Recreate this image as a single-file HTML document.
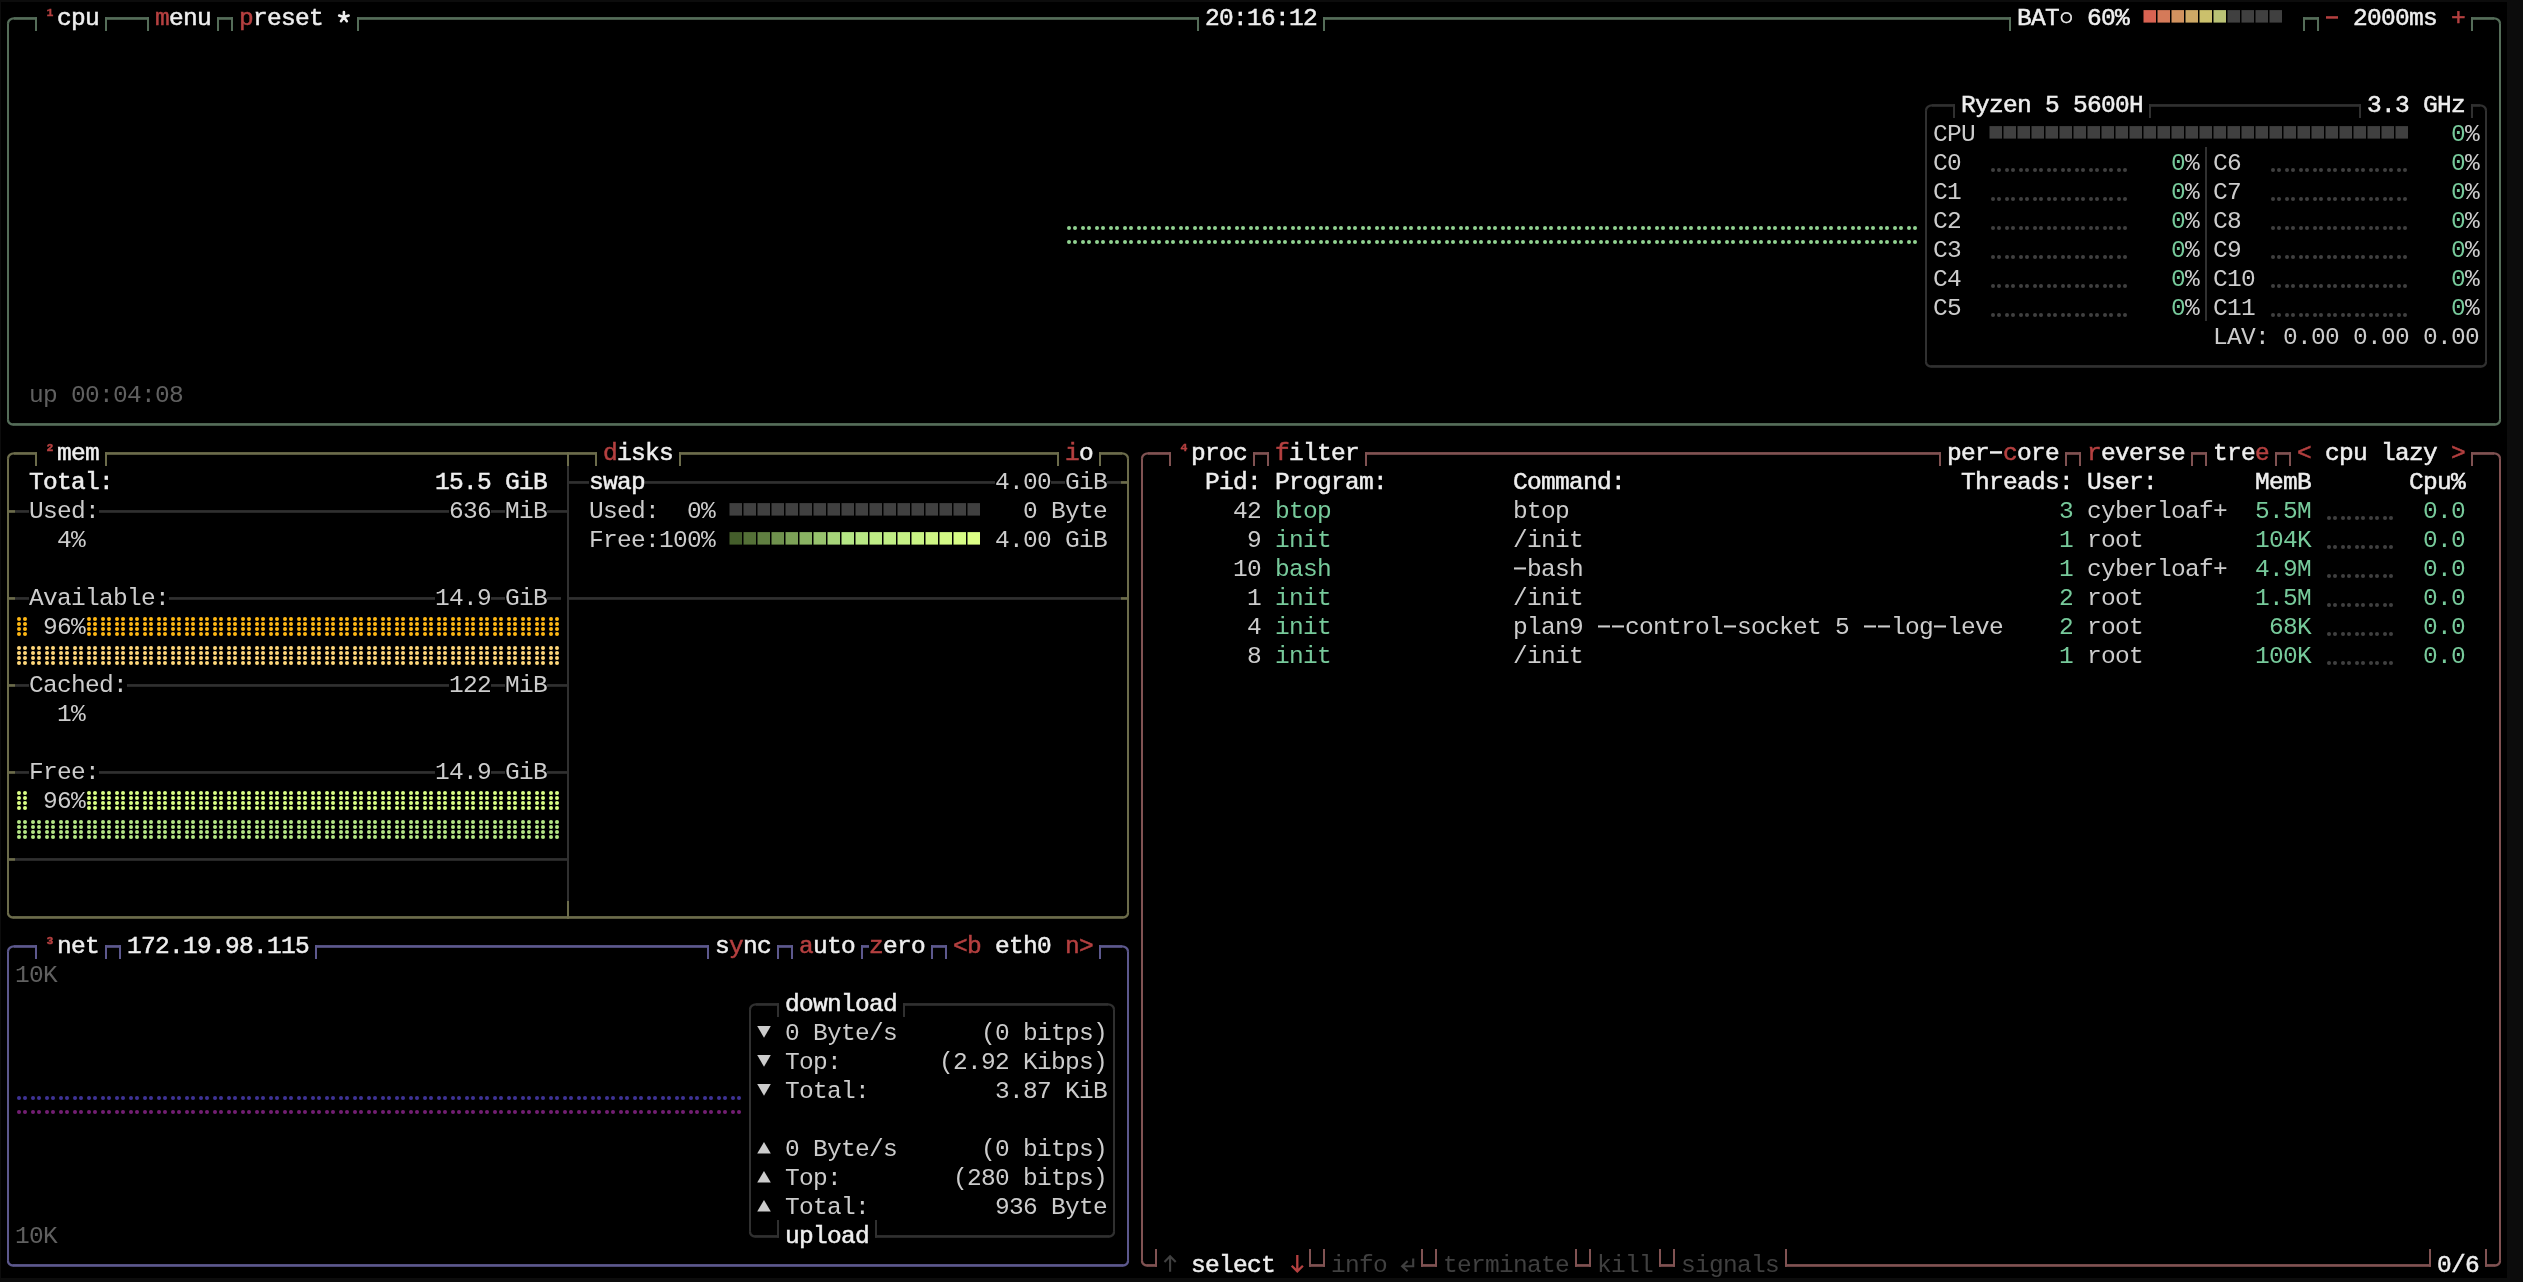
<!DOCTYPE html>
<html><head><meta charset="utf-8"><title>btop</title>
<style>
html,body{margin:0;padding:0;width:2523px;height:1282px;overflow:hidden;background:#0c0c0c}
#term{position:absolute;left:1px;top:2px;width:2506px;height:1276px;background:#000}
#g{position:absolute;left:0;top:0}
#tx{position:absolute;left:0;top:0;width:2523px;height:1282px;will-change:transform}
.s{position:absolute;white-space:pre;font-family:"Liberation Mono",monospace;font-size:24.5px;line-height:29px;letter-spacing:-0.7022px}
.b{-webkit-text-stroke:0.5px currentColor}
.sup{position:absolute;white-space:pre;font-family:"Liberation Mono",monospace;font-size:11.5px;line-height:14px;width:14px;text-align:center;font-weight:bold;-webkit-text-stroke:0.4px currentColor}
</style></head><body>
<div id="term"></div>
<svg id="g" width="2523" height="1282" viewBox="0 0 2523 1282"><defs><pattern id="p0" patternUnits="userSpaceOnUse" x="1" y="2" width="14" height="29"><g fill="#91d291"><circle cx="4" cy="23" r="2"/><circle cx="10" cy="23" r="2"/></g></pattern><pattern id="p1" patternUnits="userSpaceOnUse" x="1" y="2" width="14" height="29"><g fill="#91d291"><circle cx="4" cy="8" r="2"/><circle cx="10" cy="8" r="2"/></g></pattern><pattern id="p2" patternUnits="userSpaceOnUse" x="1" y="2" width="14" height="29"><g fill="#404040"><circle cx="4" cy="23" r="2"/><circle cx="10" cy="23" r="2"/></g></pattern><pattern id="p3" patternUnits="userSpaceOnUse" x="1" y="2" width="14" height="29"><g fill="#ffb814"><circle cx="4" cy="8" r="2"/><circle cx="10" cy="8" r="2"/><circle cx="4" cy="13" r="2"/><circle cx="10" cy="13" r="2"/><circle cx="4" cy="18" r="2"/><circle cx="10" cy="18" r="2"/><circle cx="4" cy="23" r="2"/><circle cx="10" cy="23" r="2"/></g></pattern><pattern id="p4" patternUnits="userSpaceOnUse" x="1" y="2" width="14" height="29"><g fill="#ffd77a"><circle cx="4" cy="8" r="2"/><circle cx="10" cy="8" r="2"/><circle cx="4" cy="13" r="2"/><circle cx="10" cy="13" r="2"/><circle cx="4" cy="18" r="2"/><circle cx="10" cy="18" r="2"/><circle cx="4" cy="23" r="2"/><circle cx="10" cy="23" r="2"/></g></pattern><pattern id="p5" patternUnits="userSpaceOnUse" x="1" y="2" width="14" height="29"><g fill="#dcff85"><circle cx="4" cy="8" r="2"/><circle cx="10" cy="8" r="2"/><circle cx="4" cy="13" r="2"/><circle cx="10" cy="13" r="2"/><circle cx="4" cy="18" r="2"/><circle cx="10" cy="18" r="2"/><circle cx="4" cy="23" r="2"/><circle cx="10" cy="23" r="2"/></g></pattern><pattern id="p6" patternUnits="userSpaceOnUse" x="1" y="2" width="14" height="29"><g fill="#b5e685"><circle cx="4" cy="8" r="2"/><circle cx="10" cy="8" r="2"/><circle cx="4" cy="13" r="2"/><circle cx="10" cy="13" r="2"/><circle cx="4" cy="18" r="2"/><circle cx="10" cy="18" r="2"/><circle cx="4" cy="23" r="2"/><circle cx="10" cy="23" r="2"/></g></pattern><pattern id="p7" patternUnits="userSpaceOnUse" x="1" y="2" width="14" height="29"><g fill="#3e3296"><circle cx="4" cy="23" r="2"/><circle cx="10" cy="23" r="2"/></g></pattern><pattern id="p8" patternUnits="userSpaceOnUse" x="1" y="2" width="14" height="29"><g fill="#731e73"><circle cx="4" cy="8" r="2"/><circle cx="10" cy="8" r="2"/></g></pattern></defs>
<rect x="15" y="17.1" width="22" height="2.7" fill="#556d59"/>
<rect x="105" y="17.1" width="44" height="2.7" fill="#556d59"/>
<rect x="217" y="17.1" width="16" height="2.7" fill="#556d59"/>
<rect x="357" y="17.1" width="842" height="2.7" fill="#556d59"/>
<rect x="1323" y="17.1" width="688" height="2.7" fill="#556d59"/>
<rect x="2303" y="17.1" width="16" height="2.7" fill="#556d59"/>
<rect x="2471" y="17.1" width="22" height="2.7" fill="#556d59"/>
<rect x="1933" y="104.1" width="22" height="2.7" fill="#303030"/>
<rect x="2149" y="104.1" width="212" height="2.7" fill="#303030"/>
<rect x="2471" y="104.1" width="8" height="2.7" fill="#303030"/>
<rect x="1933" y="365.1" width="546" height="2.7" fill="#303030"/>
<rect x="15" y="423.1" width="2478" height="2.7" fill="#556d59"/>
<rect x="15" y="452.1" width="22" height="2.7" fill="#6c6c4b"/>
<rect x="105" y="452.1" width="492" height="2.7" fill="#6c6c4b"/>
<rect x="679" y="452.1" width="380" height="2.7" fill="#6c6c4b"/>
<rect x="1099" y="452.1" width="22" height="2.7" fill="#6c6c4b"/>
<rect x="1149" y="452.1" width="22" height="2.7" fill="#805252"/>
<rect x="1253" y="452.1" width="16" height="2.7" fill="#805252"/>
<rect x="1365" y="452.1" width="576" height="2.7" fill="#805252"/>
<rect x="2065" y="452.1" width="16" height="2.7" fill="#805252"/>
<rect x="2191" y="452.1" width="16" height="2.7" fill="#805252"/>
<rect x="2275" y="452.1" width="16" height="2.7" fill="#805252"/>
<rect x="2471" y="452.1" width="22" height="2.7" fill="#805252"/>
<rect x="567" y="481.1" width="22" height="2.7" fill="#303030"/>
<rect x="645" y="481.1" width="350" height="2.7" fill="#303030"/>
<rect x="1051" y="481.1" width="14" height="2.7" fill="#303030"/>
<rect x="1107" y="481.1" width="14" height="2.7" fill="#303030"/>
<rect x="1121" y="481.1" width="8" height="2.7" fill="#6c6c4b"/>
<rect x="7" y="510.1" width="8" height="2.7" fill="#6c6c4b"/>
<rect x="15" y="510.1" width="14" height="2.7" fill="#303030"/>
<rect x="99" y="510.1" width="350" height="2.7" fill="#303030"/>
<rect x="491" y="510.1" width="14" height="2.7" fill="#303030"/>
<rect x="547" y="510.1" width="22" height="2.7" fill="#303030"/>
<rect x="7" y="597.1" width="8" height="2.7" fill="#6c6c4b"/>
<rect x="1121" y="597.1" width="8" height="2.7" fill="#6c6c4b"/>
<rect x="15" y="597.1" width="14" height="2.7" fill="#303030"/>
<rect x="169" y="597.1" width="266" height="2.7" fill="#303030"/>
<rect x="491" y="597.1" width="14" height="2.7" fill="#303030"/>
<rect x="547" y="597.1" width="14" height="2.7" fill="#303030"/>
<rect x="567" y="597.1" width="554" height="2.7" fill="#303030"/>
<rect x="7" y="684.1" width="8" height="2.7" fill="#6c6c4b"/>
<rect x="15" y="684.1" width="14" height="2.7" fill="#303030"/>
<rect x="127" y="684.1" width="322" height="2.7" fill="#303030"/>
<rect x="491" y="684.1" width="14" height="2.7" fill="#303030"/>
<rect x="547" y="684.1" width="22" height="2.7" fill="#303030"/>
<rect x="7" y="771.1" width="8" height="2.7" fill="#6c6c4b"/>
<rect x="15" y="771.1" width="14" height="2.7" fill="#303030"/>
<rect x="99" y="771.1" width="336" height="2.7" fill="#303030"/>
<rect x="491" y="771.1" width="14" height="2.7" fill="#303030"/>
<rect x="547" y="771.1" width="22" height="2.7" fill="#303030"/>
<rect x="7" y="858.1" width="8" height="2.7" fill="#6c6c4b"/>
<rect x="15" y="858.1" width="554" height="2.7" fill="#303030"/>
<rect x="15" y="916.1" width="1106" height="2.7" fill="#6c6c4b"/>
<rect x="15" y="945.1" width="22" height="2.7" fill="#5c588d"/>
<rect x="105" y="945.1" width="16" height="2.7" fill="#5c588d"/>
<rect x="315" y="945.1" width="394" height="2.7" fill="#5c588d"/>
<rect x="777" y="945.1" width="16" height="2.7" fill="#5c588d"/>
<rect x="861" y="945.1" width="8" height="2.7" fill="#5c588d"/>
<rect x="931" y="945.1" width="16" height="2.7" fill="#5c588d"/>
<rect x="1099" y="945.1" width="22" height="2.7" fill="#5c588d"/>
<rect x="757" y="1003.1" width="22" height="2.7" fill="#303030"/>
<rect x="903" y="1003.1" width="204" height="2.7" fill="#303030"/>
<rect x="757" y="1235.1" width="22" height="2.7" fill="#303030"/>
<rect x="875" y="1235.1" width="232" height="2.7" fill="#303030"/>
<rect x="15" y="1264.1" width="1106" height="2.7" fill="#5c588d"/>
<rect x="1149" y="1264.1" width="8" height="2.7" fill="#805252"/>
<rect x="1309" y="1264.1" width="16" height="2.7" fill="#805252"/>
<rect x="1421" y="1264.1" width="16" height="2.7" fill="#805252"/>
<rect x="1575" y="1264.1" width="16" height="2.7" fill="#805252"/>
<rect x="1659" y="1264.1" width="16" height="2.7" fill="#805252"/>
<rect x="1785" y="1264.1" width="646" height="2.7" fill="#805252"/>
<rect x="2485" y="1264.1" width="8" height="2.7" fill="#805252"/>
<rect x="35" y="17.1" width="2" height="13.9" fill="#556d59"/>
<rect x="105" y="17.1" width="2" height="13.9" fill="#556d59"/>
<rect x="147" y="17.1" width="2" height="13.9" fill="#556d59"/>
<rect x="217" y="17.1" width="2" height="13.9" fill="#556d59"/>
<rect x="231" y="17.1" width="2" height="13.9" fill="#556d59"/>
<rect x="357" y="17.1" width="2" height="13.9" fill="#556d59"/>
<rect x="1197" y="17.1" width="2" height="13.9" fill="#556d59"/>
<rect x="1323" y="17.1" width="2" height="13.9" fill="#556d59"/>
<rect x="2009" y="17.1" width="2" height="13.9" fill="#556d59"/>
<rect x="2303" y="17.1" width="2" height="13.9" fill="#556d59"/>
<rect x="2317" y="17.1" width="2" height="13.9" fill="#556d59"/>
<rect x="2471" y="17.1" width="2" height="13.9" fill="#556d59"/>
<rect x="7" y="31" width="2" height="377" fill="#556d59"/>
<rect x="2499" y="31" width="2" height="377" fill="#556d59"/>
<rect x="1953" y="104.1" width="2" height="13.9" fill="#303030"/>
<rect x="2149" y="104.1" width="2" height="13.9" fill="#303030"/>
<rect x="2359" y="104.1" width="2" height="13.9" fill="#303030"/>
<rect x="2471" y="104.1" width="2" height="13.9" fill="#303030"/>
<rect x="1925" y="118" width="2" height="232" fill="#303030"/>
<rect x="2485" y="118" width="2" height="232" fill="#303030"/>
<rect x="2205" y="147" width="2" height="174" fill="#303030"/>
<rect x="35" y="452.1" width="2" height="13.9" fill="#6c6c4b"/>
<rect x="105" y="452.1" width="2" height="13.9" fill="#6c6c4b"/>
<rect x="567" y="452.1" width="2" height="13.9" fill="#6c6c4b"/>
<rect x="567" y="901" width="2" height="17.8" fill="#6c6c4b"/>
<rect x="595" y="452.1" width="2" height="13.9" fill="#6c6c4b"/>
<rect x="679" y="452.1" width="2" height="13.9" fill="#6c6c4b"/>
<rect x="1057" y="452.1" width="2" height="13.9" fill="#6c6c4b"/>
<rect x="1099" y="452.1" width="2" height="13.9" fill="#6c6c4b"/>
<rect x="1169" y="452.1" width="2" height="13.9" fill="#805252"/>
<rect x="1253" y="452.1" width="2" height="13.9" fill="#805252"/>
<rect x="1267" y="452.1" width="2" height="13.9" fill="#805252"/>
<rect x="1365" y="452.1" width="2" height="13.9" fill="#805252"/>
<rect x="1939" y="452.1" width="2" height="13.9" fill="#805252"/>
<rect x="2065" y="452.1" width="2" height="13.9" fill="#805252"/>
<rect x="2079" y="452.1" width="2" height="13.9" fill="#805252"/>
<rect x="2191" y="452.1" width="2" height="13.9" fill="#805252"/>
<rect x="2205" y="452.1" width="2" height="13.9" fill="#805252"/>
<rect x="2275" y="452.1" width="2" height="13.9" fill="#805252"/>
<rect x="2289" y="452.1" width="2" height="13.9" fill="#805252"/>
<rect x="2471" y="452.1" width="2" height="13.9" fill="#805252"/>
<rect x="7" y="466" width="2" height="435" fill="#6c6c4b"/>
<rect x="567" y="466" width="2" height="435" fill="#303030"/>
<rect x="1127" y="466" width="2" height="435" fill="#6c6c4b"/>
<rect x="1141" y="466" width="2" height="783" fill="#805252"/>
<rect x="2499" y="466" width="2" height="783" fill="#805252"/>
<rect x="35" y="945.1" width="2" height="13.9" fill="#5c588d"/>
<rect x="105" y="945.1" width="2" height="13.9" fill="#5c588d"/>
<rect x="119" y="945.1" width="2" height="13.9" fill="#5c588d"/>
<rect x="315" y="945.1" width="2" height="13.9" fill="#5c588d"/>
<rect x="707" y="945.1" width="2" height="13.9" fill="#5c588d"/>
<rect x="777" y="945.1" width="2" height="13.9" fill="#5c588d"/>
<rect x="791" y="945.1" width="2" height="13.9" fill="#5c588d"/>
<rect x="861" y="945.1" width="2" height="13.9" fill="#5c588d"/>
<rect x="931" y="945.1" width="2" height="13.9" fill="#5c588d"/>
<rect x="945" y="945.1" width="2" height="13.9" fill="#5c588d"/>
<rect x="1099" y="945.1" width="2" height="13.9" fill="#5c588d"/>
<rect x="7" y="959" width="2" height="290" fill="#5c588d"/>
<rect x="1127" y="959" width="2" height="290" fill="#5c588d"/>
<rect x="777" y="1003.1" width="2" height="13.9" fill="#303030"/>
<rect x="777" y="1220" width="2" height="17.8" fill="#303030"/>
<rect x="903" y="1003.1" width="2" height="13.9" fill="#303030"/>
<rect x="749" y="1017" width="2" height="203" fill="#303030"/>
<rect x="1113" y="1017" width="2" height="203" fill="#303030"/>
<rect x="875" y="1220" width="2" height="17.8" fill="#303030"/>
<rect x="1155" y="1249" width="2" height="17.8" fill="#805252"/>
<rect x="1309" y="1249" width="2" height="17.8" fill="#805252"/>
<rect x="1323" y="1249" width="2" height="17.8" fill="#805252"/>
<rect x="1421" y="1249" width="2" height="17.8" fill="#805252"/>
<rect x="1435" y="1249" width="2" height="17.8" fill="#805252"/>
<rect x="1575" y="1249" width="2" height="17.8" fill="#805252"/>
<rect x="1589" y="1249" width="2" height="17.8" fill="#805252"/>
<rect x="1659" y="1249" width="2" height="17.8" fill="#805252"/>
<rect x="1673" y="1249" width="2" height="17.8" fill="#805252"/>
<rect x="1785" y="1249" width="2" height="17.8" fill="#805252"/>
<rect x="2429" y="1249" width="2" height="17.8" fill="#805252"/>
<rect x="2485" y="1249" width="2" height="17.8" fill="#805252"/>
<rect x="7" y="23.45" width="2" height="7.55" fill="#556d59"/>
<rect x="14" y="17.1" width="1" height="2.7" fill="#556d59"/>
<path d="M8 23.75A6 5 0 0 1 14.3 18.45" fill="none" stroke="#556d59" stroke-width="2.35"/>
<rect x="2499" y="23.45" width="2" height="7.55" fill="#556d59"/>
<rect x="2493" y="17.1" width="1" height="2.7" fill="#556d59"/>
<path d="M2493.7 18.45A6 5 0 0 1 2500 23.75" fill="none" stroke="#556d59" stroke-width="2.35"/>
<rect x="1925" y="110.45" width="2" height="7.55" fill="#303030"/>
<rect x="1932" y="104.1" width="1" height="2.7" fill="#303030"/>
<path d="M1926 110.75A6 5 0 0 1 1932.3 105.45" fill="none" stroke="#303030" stroke-width="2.35"/>
<rect x="2485" y="110.45" width="2" height="7.55" fill="#303030"/>
<rect x="2479" y="104.1" width="1" height="2.7" fill="#303030"/>
<path d="M2479.7 105.45A6 5 0 0 1 2486 110.75" fill="none" stroke="#303030" stroke-width="2.35"/>
<rect x="1925" y="350" width="2" height="11.85" fill="#303030"/>
<rect x="1931" y="365.1" width="2" height="2.7" fill="#303030"/>
<path d="M1926 361.55A5 4.6 0 0 0 1931.3 366.45" fill="none" stroke="#303030" stroke-width="2.35"/>
<rect x="2485" y="350" width="2" height="11.85" fill="#303030"/>
<rect x="2479" y="365.1" width="2" height="2.7" fill="#303030"/>
<path d="M2480.7 366.45A5 4.6 0 0 0 2486 361.55" fill="none" stroke="#303030" stroke-width="2.35"/>
<rect x="7" y="408" width="2" height="11.85" fill="#556d59"/>
<rect x="13" y="423.1" width="2" height="2.7" fill="#556d59"/>
<path d="M8 419.55A5 4.6 0 0 0 13.3 424.45" fill="none" stroke="#556d59" stroke-width="2.35"/>
<rect x="2499" y="408" width="2" height="11.85" fill="#556d59"/>
<rect x="2493" y="423.1" width="2" height="2.7" fill="#556d59"/>
<path d="M2494.7 424.45A5 4.6 0 0 0 2500 419.55" fill="none" stroke="#556d59" stroke-width="2.35"/>
<rect x="7" y="458.45" width="2" height="7.55" fill="#6c6c4b"/>
<rect x="14" y="452.1" width="1" height="2.7" fill="#6c6c4b"/>
<path d="M8 458.75A6 5 0 0 1 14.3 453.45" fill="none" stroke="#6c6c4b" stroke-width="2.35"/>
<rect x="1127" y="458.45" width="2" height="7.55" fill="#6c6c4b"/>
<rect x="1121" y="452.1" width="1" height="2.7" fill="#6c6c4b"/>
<path d="M1121.7 453.45A6 5 0 0 1 1128 458.75" fill="none" stroke="#6c6c4b" stroke-width="2.35"/>
<rect x="1141" y="458.45" width="2" height="7.55" fill="#805252"/>
<rect x="1148" y="452.1" width="1" height="2.7" fill="#805252"/>
<path d="M1142 458.75A6 5 0 0 1 1148.3 453.45" fill="none" stroke="#805252" stroke-width="2.35"/>
<rect x="2499" y="458.45" width="2" height="7.55" fill="#805252"/>
<rect x="2493" y="452.1" width="1" height="2.7" fill="#805252"/>
<path d="M2493.7 453.45A6 5 0 0 1 2500 458.75" fill="none" stroke="#805252" stroke-width="2.35"/>
<rect x="7" y="901" width="2" height="11.85" fill="#6c6c4b"/>
<rect x="13" y="916.1" width="2" height="2.7" fill="#6c6c4b"/>
<path d="M8 912.55A5 4.6 0 0 0 13.3 917.45" fill="none" stroke="#6c6c4b" stroke-width="2.35"/>
<rect x="1127" y="901" width="2" height="11.85" fill="#6c6c4b"/>
<rect x="1121" y="916.1" width="2" height="2.7" fill="#6c6c4b"/>
<path d="M1122.7 917.45A5 4.6 0 0 0 1128 912.55" fill="none" stroke="#6c6c4b" stroke-width="2.35"/>
<rect x="7" y="951.45" width="2" height="7.55" fill="#5c588d"/>
<rect x="14" y="945.1" width="1" height="2.7" fill="#5c588d"/>
<path d="M8 951.75A6 5 0 0 1 14.3 946.45" fill="none" stroke="#5c588d" stroke-width="2.35"/>
<rect x="1127" y="951.45" width="2" height="7.55" fill="#5c588d"/>
<rect x="1121" y="945.1" width="1" height="2.7" fill="#5c588d"/>
<path d="M1121.7 946.45A6 5 0 0 1 1128 951.75" fill="none" stroke="#5c588d" stroke-width="2.35"/>
<rect x="749" y="1009.45" width="2" height="7.55" fill="#303030"/>
<rect x="756" y="1003.1" width="1" height="2.7" fill="#303030"/>
<path d="M750 1009.75A6 5 0 0 1 756.3 1004.45" fill="none" stroke="#303030" stroke-width="2.35"/>
<rect x="1113" y="1009.45" width="2" height="7.55" fill="#303030"/>
<rect x="1107" y="1003.1" width="1" height="2.7" fill="#303030"/>
<path d="M1107.7 1004.45A6 5 0 0 1 1114 1009.75" fill="none" stroke="#303030" stroke-width="2.35"/>
<rect x="749" y="1220" width="2" height="11.85" fill="#303030"/>
<rect x="755" y="1235.1" width="2" height="2.7" fill="#303030"/>
<path d="M750 1231.55A5 4.6 0 0 0 755.3 1236.45" fill="none" stroke="#303030" stroke-width="2.35"/>
<rect x="1113" y="1220" width="2" height="11.85" fill="#303030"/>
<rect x="1107" y="1235.1" width="2" height="2.7" fill="#303030"/>
<path d="M1108.7 1236.45A5 4.6 0 0 0 1114 1231.55" fill="none" stroke="#303030" stroke-width="2.35"/>
<rect x="7" y="1249" width="2" height="11.85" fill="#5c588d"/>
<rect x="13" y="1264.1" width="2" height="2.7" fill="#5c588d"/>
<path d="M8 1260.55A5 4.6 0 0 0 13.3 1265.45" fill="none" stroke="#5c588d" stroke-width="2.35"/>
<rect x="1127" y="1249" width="2" height="11.85" fill="#5c588d"/>
<rect x="1121" y="1264.1" width="2" height="2.7" fill="#5c588d"/>
<path d="M1122.7 1265.45A5 4.6 0 0 0 1128 1260.55" fill="none" stroke="#5c588d" stroke-width="2.35"/>
<rect x="1141" y="1249" width="2" height="11.85" fill="#805252"/>
<rect x="1147" y="1264.1" width="2" height="2.7" fill="#805252"/>
<path d="M1142 1260.55A5 4.6 0 0 0 1147.3 1265.45" fill="none" stroke="#805252" stroke-width="2.35"/>
<rect x="2499" y="1249" width="2" height="11.85" fill="#805252"/>
<rect x="2493" y="1264.1" width="2" height="2.7" fill="#805252"/>
<path d="M2494.7 1265.45A5 4.6 0 0 0 2500 1260.55" fill="none" stroke="#805252" stroke-width="2.35"/>
<rect x="1065" y="205" width="854" height="29" fill="url(#p0)"/>
<rect x="1065" y="234" width="854" height="29" fill="url(#p1)"/>
<rect x="1989" y="147" width="140" height="29" fill="url(#p2)"/>
<rect x="2269" y="147" width="140" height="29" fill="url(#p2)"/>
<rect x="1989" y="176" width="140" height="29" fill="url(#p2)"/>
<rect x="2269" y="176" width="140" height="29" fill="url(#p2)"/>
<rect x="1989" y="205" width="140" height="29" fill="url(#p2)"/>
<rect x="2269" y="205" width="140" height="29" fill="url(#p2)"/>
<rect x="1989" y="234" width="140" height="29" fill="url(#p2)"/>
<rect x="2269" y="234" width="140" height="29" fill="url(#p2)"/>
<rect x="1989" y="263" width="140" height="29" fill="url(#p2)"/>
<rect x="2269" y="263" width="140" height="29" fill="url(#p2)"/>
<rect x="1989" y="292" width="140" height="29" fill="url(#p2)"/>
<rect x="2269" y="292" width="140" height="29" fill="url(#p2)"/>
<rect x="15" y="611" width="14" height="29" fill="url(#p3)"/>
<rect x="85" y="611" width="476" height="29" fill="url(#p3)"/>
<rect x="15" y="640" width="546" height="29" fill="url(#p4)"/>
<rect x="15" y="785" width="14" height="29" fill="url(#p5)"/>
<rect x="85" y="785" width="476" height="29" fill="url(#p5)"/>
<rect x="15" y="814" width="546" height="29" fill="url(#p6)"/>
<rect x="15" y="1075" width="728" height="29" fill="url(#p7)"/>
<rect x="15" y="1104" width="728" height="29" fill="url(#p8)"/>
<rect x="2325" y="495" width="70" height="29" fill="url(#p2)"/>
<rect x="2325" y="524" width="70" height="29" fill="url(#p2)"/>
<rect x="2325" y="553" width="70" height="29" fill="url(#p2)"/>
<rect x="2325" y="582" width="70" height="29" fill="url(#p2)"/>
<rect x="2325" y="611" width="70" height="29" fill="url(#p2)"/>
<rect x="2325" y="640" width="70" height="29" fill="url(#p2)"/>
<rect x="2143.5" y="10.1" width="12.5" height="12.5" fill="#d96352"/>
<rect x="2157.5" y="10.1" width="12.5" height="12.5" fill="#d57a59"/>
<rect x="2171.5" y="10.1" width="12.5" height="12.5" fill="#d2925f"/>
<rect x="2185.5" y="10.1" width="12.5" height="12.5" fill="#cea966"/>
<rect x="2199.5" y="10.1" width="12.5" height="12.5" fill="#cbc06c"/>
<rect x="2213.5" y="10.1" width="12.5" height="12.5" fill="#bac275"/>
<rect x="2227.5" y="10.1" width="12.5" height="12.5" fill="#404040"/>
<rect x="2241.5" y="10.1" width="12.5" height="12.5" fill="#404040"/>
<rect x="2255.5" y="10.1" width="12.5" height="12.5" fill="#404040"/>
<rect x="2269.5" y="10.1" width="12.5" height="12.5" fill="#404040"/>
<rect x="1989.5" y="126.1" width="12.5" height="12.5" fill="#404040"/>
<rect x="2003.5" y="126.1" width="12.5" height="12.5" fill="#404040"/>
<rect x="2017.5" y="126.1" width="12.5" height="12.5" fill="#404040"/>
<rect x="2031.5" y="126.1" width="12.5" height="12.5" fill="#404040"/>
<rect x="2045.5" y="126.1" width="12.5" height="12.5" fill="#404040"/>
<rect x="2059.5" y="126.1" width="12.5" height="12.5" fill="#404040"/>
<rect x="2073.5" y="126.1" width="12.5" height="12.5" fill="#404040"/>
<rect x="2087.5" y="126.1" width="12.5" height="12.5" fill="#404040"/>
<rect x="2101.5" y="126.1" width="12.5" height="12.5" fill="#404040"/>
<rect x="2115.5" y="126.1" width="12.5" height="12.5" fill="#404040"/>
<rect x="2129.5" y="126.1" width="12.5" height="12.5" fill="#404040"/>
<rect x="2143.5" y="126.1" width="12.5" height="12.5" fill="#404040"/>
<rect x="2157.5" y="126.1" width="12.5" height="12.5" fill="#404040"/>
<rect x="2171.5" y="126.1" width="12.5" height="12.5" fill="#404040"/>
<rect x="2185.5" y="126.1" width="12.5" height="12.5" fill="#404040"/>
<rect x="2199.5" y="126.1" width="12.5" height="12.5" fill="#404040"/>
<rect x="2213.5" y="126.1" width="12.5" height="12.5" fill="#404040"/>
<rect x="2227.5" y="126.1" width="12.5" height="12.5" fill="#404040"/>
<rect x="2241.5" y="126.1" width="12.5" height="12.5" fill="#404040"/>
<rect x="2255.5" y="126.1" width="12.5" height="12.5" fill="#404040"/>
<rect x="2269.5" y="126.1" width="12.5" height="12.5" fill="#404040"/>
<rect x="2283.5" y="126.1" width="12.5" height="12.5" fill="#404040"/>
<rect x="2297.5" y="126.1" width="12.5" height="12.5" fill="#404040"/>
<rect x="2311.5" y="126.1" width="12.5" height="12.5" fill="#404040"/>
<rect x="2325.5" y="126.1" width="12.5" height="12.5" fill="#404040"/>
<rect x="2339.5" y="126.1" width="12.5" height="12.5" fill="#404040"/>
<rect x="2353.5" y="126.1" width="12.5" height="12.5" fill="#404040"/>
<rect x="2367.5" y="126.1" width="12.5" height="12.5" fill="#404040"/>
<rect x="2381.5" y="126.1" width="12.5" height="12.5" fill="#404040"/>
<rect x="2395.5" y="126.1" width="12.5" height="12.5" fill="#404040"/>
<rect x="729.5" y="503.1" width="12.5" height="12.5" fill="#404040"/>
<rect x="729.5" y="532.1" width="12.5" height="12.5" fill="#445e2b"/>
<rect x="743.5" y="503.1" width="12.5" height="12.5" fill="#404040"/>
<rect x="743.5" y="532.1" width="12.5" height="12.5" fill="#547037"/>
<rect x="757.5" y="503.1" width="12.5" height="12.5" fill="#404040"/>
<rect x="757.5" y="532.1" width="12.5" height="12.5" fill="#607f41"/>
<rect x="771.5" y="503.1" width="12.5" height="12.5" fill="#404040"/>
<rect x="771.5" y="532.1" width="12.5" height="12.5" fill="#6f914d"/>
<rect x="785.5" y="503.1" width="12.5" height="12.5" fill="#404040"/>
<rect x="785.5" y="532.1" width="12.5" height="12.5" fill="#7ca157"/>
<rect x="799.5" y="503.1" width="12.5" height="12.5" fill="#404040"/>
<rect x="799.5" y="532.1" width="12.5" height="12.5" fill="#8ab363"/>
<rect x="813.5" y="503.1" width="12.5" height="12.5" fill="#404040"/>
<rect x="813.5" y="532.1" width="12.5" height="12.5" fill="#97c26d"/>
<rect x="827.5" y="503.1" width="12.5" height="12.5" fill="#404040"/>
<rect x="827.5" y="532.1" width="12.5" height="12.5" fill="#a6d479"/>
<rect x="841.5" y="503.1" width="12.5" height="12.5" fill="#404040"/>
<rect x="841.5" y="532.1" width="12.5" height="12.5" fill="#b5e685"/>
<rect x="855.5" y="503.1" width="12.5" height="12.5" fill="#404040"/>
<rect x="855.5" y="532.1" width="12.5" height="12.5" fill="#b9e885"/>
<rect x="869.5" y="503.1" width="12.5" height="12.5" fill="#404040"/>
<rect x="869.5" y="532.1" width="12.5" height="12.5" fill="#beec85"/>
<rect x="883.5" y="503.1" width="12.5" height="12.5" fill="#404040"/>
<rect x="883.5" y="532.1" width="12.5" height="12.5" fill="#c1ee85"/>
<rect x="897.5" y="503.1" width="12.5" height="12.5" fill="#404040"/>
<rect x="897.5" y="532.1" width="12.5" height="12.5" fill="#c6f185"/>
<rect x="911.5" y="503.1" width="12.5" height="12.5" fill="#404040"/>
<rect x="911.5" y="532.1" width="12.5" height="12.5" fill="#caf485"/>
<rect x="925.5" y="503.1" width="12.5" height="12.5" fill="#404040"/>
<rect x="925.5" y="532.1" width="12.5" height="12.5" fill="#cff685"/>
<rect x="939.5" y="503.1" width="12.5" height="12.5" fill="#404040"/>
<rect x="939.5" y="532.1" width="12.5" height="12.5" fill="#d3f985"/>
<rect x="953.5" y="503.1" width="12.5" height="12.5" fill="#404040"/>
<rect x="953.5" y="532.1" width="12.5" height="12.5" fill="#d7fc85"/>
<rect x="967.5" y="503.1" width="12.5" height="12.5" fill="#404040"/>
<rect x="967.5" y="532.1" width="12.5" height="12.5" fill="#dcff85"/>
<polygon points="757.2,1026 770.8,1026 764,1037.8" fill="#cccccc"/>
<polygon points="757.2,1055 770.8,1055 764,1066.8" fill="#cccccc"/>
<polygon points="757.2,1084 770.8,1084 764,1095.8" fill="#cccccc"/>
<polygon points="757.2,1153.5 770.8,1153.5 764,1141.9" fill="#cccccc"/>
<polygon points="757.2,1182.5 770.8,1182.5 764,1170.9" fill="#cccccc"/>
<polygon points="757.2,1211.5 770.8,1211.5 764,1199.9" fill="#cccccc"/>
<path d="M343.9 17.1L343.9 12.1M343.9 17.1L348.66 15.55M343.9 17.1L346.84 21.15M343.9 17.1L340.96 21.15M343.9 17.1L339.14 15.55" fill="none" stroke="#eeeeee" stroke-width="2.6" stroke-linecap="round"/>
<rect x="2326" y="16.2" width="12" height="2.5" fill="#b54040"/>
<rect x="1990" y="451.2" width="12" height="2.5" fill="#eeeeee"/>
<rect x="1514" y="567.4" width="12" height="2.1" fill="#cccccc"/>
<rect x="1598" y="625.4" width="12" height="2.1" fill="#cccccc"/>
<rect x="1612" y="625.4" width="12" height="2.1" fill="#cccccc"/>
<rect x="1724" y="625.4" width="12" height="2.1" fill="#cccccc"/>
<rect x="1864" y="625.4" width="12" height="2.1" fill="#cccccc"/>
<rect x="1878" y="625.4" width="12" height="2.1" fill="#cccccc"/>
<rect x="1934" y="625.4" width="12" height="2.1" fill="#cccccc"/>
<path d="M1170.1 1271.8V1257 M1164.5 1261.9L1170.1 1256.3L1175.7 1261.9" fill="none" stroke="#404040" stroke-width="2.1" stroke-linejoin="miter"/>
<path d="M1297.3 1255V1270.8 M1291.7 1265.8L1297.3 1271.4L1302.9 1265.8" fill="none" stroke="#b54040" stroke-width="2.3" stroke-linejoin="miter"/>
<path d="M1413.2 1258.6V1266.3H1402.2 M1407.6 1260.9L1402.1 1266.3L1407.6 1271.2" fill="none" stroke="#404040" stroke-width="2.1"/>
</svg>
<div id="tx">
<span class="sup" style="left:43px;top:6px;color:#b54040">1</span>
<span class="s b" style="left:57px;top:4px;color:#eeeeee">cpu</span>
<span class="s b" style="left:155px;top:4px;color:#b54040">m</span>
<span class="s b" style="left:169px;top:4px;color:#eeeeee">enu</span>
<span class="s b" style="left:239px;top:4px;color:#b54040">p</span>
<span class="s b" style="left:253px;top:4px;color:#eeeeee">reset </span>
<span class="s b" style="left:1205px;top:4px;color:#eeeeee">20:16:12</span>
<span class="s b" style="left:2017px;top:4px;color:#eeeeee">BAT○ 60% </span>
<span class="s b" style="left:2339px;top:4px;color:#eeeeee"> 2000ms </span>
<span class="s b" style="left:2451px;top:4px;color:#b54040">+</span>
<span class="s b" style="left:1961px;top:91px;color:#eeeeee">Ryzen 5 5600H</span>
<span class="s b" style="left:2367px;top:91px;color:#eeeeee">3.3 GHz</span>
<span class="s" style="left:1933px;top:120px;color:#cccccc">CPU</span>
<span class="s" style="left:2451px;top:120px;color:#77ca9b">0</span>
<span class="s" style="left:2465px;top:120px;color:#cccccc">%</span>
<span class="s" style="left:1933px;top:149px;color:#cccccc">C0</span>
<span class="s" style="left:2171px;top:149px;color:#77ca9b">0</span>
<span class="s" style="left:2185px;top:149px;color:#cccccc">%</span>
<span class="s" style="left:2213px;top:149px;color:#cccccc">C6</span>
<span class="s" style="left:2451px;top:149px;color:#77ca9b">0</span>
<span class="s" style="left:2465px;top:149px;color:#cccccc">%</span>
<span class="s" style="left:1933px;top:178px;color:#cccccc">C1</span>
<span class="s" style="left:2171px;top:178px;color:#77ca9b">0</span>
<span class="s" style="left:2185px;top:178px;color:#cccccc">%</span>
<span class="s" style="left:2213px;top:178px;color:#cccccc">C7</span>
<span class="s" style="left:2451px;top:178px;color:#77ca9b">0</span>
<span class="s" style="left:2465px;top:178px;color:#cccccc">%</span>
<span class="s" style="left:1933px;top:207px;color:#cccccc">C2</span>
<span class="s" style="left:2171px;top:207px;color:#77ca9b">0</span>
<span class="s" style="left:2185px;top:207px;color:#cccccc">%</span>
<span class="s" style="left:2213px;top:207px;color:#cccccc">C8</span>
<span class="s" style="left:2451px;top:207px;color:#77ca9b">0</span>
<span class="s" style="left:2465px;top:207px;color:#cccccc">%</span>
<span class="s" style="left:1933px;top:236px;color:#cccccc">C3</span>
<span class="s" style="left:2171px;top:236px;color:#77ca9b">0</span>
<span class="s" style="left:2185px;top:236px;color:#cccccc">%</span>
<span class="s" style="left:2213px;top:236px;color:#cccccc">C9</span>
<span class="s" style="left:2451px;top:236px;color:#77ca9b">0</span>
<span class="s" style="left:2465px;top:236px;color:#cccccc">%</span>
<span class="s" style="left:1933px;top:265px;color:#cccccc">C4</span>
<span class="s" style="left:2171px;top:265px;color:#77ca9b">0</span>
<span class="s" style="left:2185px;top:265px;color:#cccccc">%</span>
<span class="s" style="left:2213px;top:265px;color:#cccccc">C10</span>
<span class="s" style="left:2451px;top:265px;color:#77ca9b">0</span>
<span class="s" style="left:2465px;top:265px;color:#cccccc">%</span>
<span class="s" style="left:1933px;top:294px;color:#cccccc">C5</span>
<span class="s" style="left:2171px;top:294px;color:#77ca9b">0</span>
<span class="s" style="left:2185px;top:294px;color:#cccccc">%</span>
<span class="s" style="left:2213px;top:294px;color:#cccccc">C11</span>
<span class="s" style="left:2451px;top:294px;color:#77ca9b">0</span>
<span class="s" style="left:2465px;top:294px;color:#cccccc">%</span>
<span class="s" style="left:2213px;top:323px;color:#cccccc">LAV: 0.00 0.00 0.00</span>
<span class="s" style="left:29px;top:381px;color:#606060">up 00:04:08</span>
<span class="sup" style="left:43px;top:441px;color:#b54040">2</span>
<span class="s b" style="left:57px;top:439px;color:#eeeeee">mem</span>
<span class="s b" style="left:603px;top:439px;color:#b54040">d</span>
<span class="s b" style="left:617px;top:439px;color:#eeeeee">isks</span>
<span class="s b" style="left:1065px;top:439px;color:#b54040">i</span>
<span class="s b" style="left:1079px;top:439px;color:#eeeeee">o</span>
<span class="sup" style="left:1177px;top:441px;color:#b54040">4</span>
<span class="s b" style="left:1191px;top:439px;color:#eeeeee">proc</span>
<span class="s b" style="left:1275px;top:439px;color:#b54040">f</span>
<span class="s b" style="left:1289px;top:439px;color:#eeeeee">ilter</span>
<span class="s b" style="left:1947px;top:439px;color:#eeeeee">per</span>
<span class="s b" style="left:2003px;top:439px;color:#b54040">c</span>
<span class="s b" style="left:2017px;top:439px;color:#eeeeee">ore</span>
<span class="s b" style="left:2087px;top:439px;color:#b54040">r</span>
<span class="s b" style="left:2101px;top:439px;color:#eeeeee">everse</span>
<span class="s b" style="left:2213px;top:439px;color:#eeeeee">tre</span>
<span class="s b" style="left:2255px;top:439px;color:#b54040">e</span>
<span class="s b" style="left:2297px;top:439px;color:#b54040">&lt;</span>
<span class="s b" style="left:2311px;top:439px;color:#eeeeee"> cpu lazy </span>
<span class="s b" style="left:2451px;top:439px;color:#b54040">&gt;</span>
<span class="s b" style="left:29px;top:468px;color:#eeeeee">Total:</span>
<span class="s b" style="left:435px;top:468px;color:#eeeeee">15.5 GiB</span>
<span class="s b" style="left:589px;top:468px;color:#eeeeee">swap</span>
<span class="s" style="left:995px;top:468px;color:#cccccc">4.00</span>
<span class="s" style="left:1065px;top:468px;color:#cccccc">GiB</span>
<span class="s b" style="left:1205px;top:468px;color:#eeeeee">Pid:</span>
<span class="s b" style="left:1275px;top:468px;color:#eeeeee">Program:</span>
<span class="s b" style="left:1513px;top:468px;color:#eeeeee">Command:</span>
<span class="s b" style="left:1961px;top:468px;color:#eeeeee">Threads:</span>
<span class="s b" style="left:2087px;top:468px;color:#eeeeee">User:</span>
<span class="s b" style="left:2255px;top:468px;color:#eeeeee">MemB</span>
<span class="s b" style="left:2409px;top:468px;color:#eeeeee">Cpu%</span>
<span class="s" style="left:29px;top:497px;color:#cccccc">Used:</span>
<span class="s" style="left:449px;top:497px;color:#cccccc">636</span>
<span class="s" style="left:505px;top:497px;color:#cccccc">MiB</span>
<span class="s" style="left:589px;top:497px;color:#cccccc">Used:</span>
<span class="s" style="left:687px;top:497px;color:#cccccc">0%</span>
<span class="s" style="left:1023px;top:497px;color:#cccccc">0 Byte</span>
<span class="s" style="left:1233px;top:497px;color:#cccccc">42</span>
<span class="s" style="left:1275px;top:497px;color:#77ca9b">btop</span>
<span class="s" style="left:1513px;top:497px;color:#cccccc">btop</span>
<span class="s" style="left:2059px;top:497px;color:#77ca9b">3</span>
<span class="s" style="left:2087px;top:497px;color:#cccccc">cyberloaf+</span>
<span class="s" style="left:2255px;top:497px;color:#77ca9b">5.5M</span>
<span class="s" style="left:2423px;top:497px;color:#77ca9b">0.0</span>
<span class="s" style="left:57px;top:526px;color:#cccccc">4%</span>
<span class="s" style="left:589px;top:526px;color:#cccccc">Free:100%</span>
<span class="s" style="left:995px;top:526px;color:#cccccc">4.00 GiB</span>
<span class="s" style="left:1247px;top:526px;color:#cccccc">9</span>
<span class="s" style="left:1275px;top:526px;color:#77ca9b">init</span>
<span class="s" style="left:1513px;top:526px;color:#cccccc">/init</span>
<span class="s" style="left:2059px;top:526px;color:#77ca9b">1</span>
<span class="s" style="left:2087px;top:526px;color:#cccccc">root</span>
<span class="s" style="left:2255px;top:526px;color:#77ca9b">104K</span>
<span class="s" style="left:2423px;top:526px;color:#77ca9b">0.0</span>
<span class="s" style="left:1233px;top:555px;color:#cccccc">10</span>
<span class="s" style="left:1275px;top:555px;color:#77ca9b">bash</span>
<span class="s" style="left:1527px;top:555px;color:#cccccc">bash</span>
<span class="s" style="left:2059px;top:555px;color:#77ca9b">1</span>
<span class="s" style="left:2087px;top:555px;color:#cccccc">cyberloaf+</span>
<span class="s" style="left:2255px;top:555px;color:#77ca9b">4.9M</span>
<span class="s" style="left:2423px;top:555px;color:#77ca9b">0.0</span>
<span class="s" style="left:29px;top:584px;color:#cccccc">Available:</span>
<span class="s" style="left:435px;top:584px;color:#cccccc">14.9</span>
<span class="s" style="left:505px;top:584px;color:#cccccc">GiB</span>
<span class="s" style="left:1247px;top:584px;color:#cccccc">1</span>
<span class="s" style="left:1275px;top:584px;color:#77ca9b">init</span>
<span class="s" style="left:1513px;top:584px;color:#cccccc">/init</span>
<span class="s" style="left:2059px;top:584px;color:#77ca9b">2</span>
<span class="s" style="left:2087px;top:584px;color:#cccccc">root</span>
<span class="s" style="left:2255px;top:584px;color:#77ca9b">1.5M</span>
<span class="s" style="left:2423px;top:584px;color:#77ca9b">0.0</span>
<span class="s" style="left:43px;top:613px;color:#cccccc">96%</span>
<span class="s" style="left:1247px;top:613px;color:#cccccc">4</span>
<span class="s" style="left:1275px;top:613px;color:#77ca9b">init</span>
<span class="s" style="left:1513px;top:613px;color:#cccccc">plan9 </span>
<span class="s" style="left:1625px;top:613px;color:#cccccc">control</span>
<span class="s" style="left:1737px;top:613px;color:#cccccc">socket 5 </span>
<span class="s" style="left:1891px;top:613px;color:#cccccc">log</span>
<span class="s" style="left:1947px;top:613px;color:#cccccc">leve</span>
<span class="s" style="left:2059px;top:613px;color:#77ca9b">2</span>
<span class="s" style="left:2087px;top:613px;color:#cccccc">root</span>
<span class="s" style="left:2269px;top:613px;color:#77ca9b">68K</span>
<span class="s" style="left:2423px;top:613px;color:#77ca9b">0.0</span>
<span class="s" style="left:1247px;top:642px;color:#cccccc">8</span>
<span class="s" style="left:1275px;top:642px;color:#77ca9b">init</span>
<span class="s" style="left:1513px;top:642px;color:#cccccc">/init</span>
<span class="s" style="left:2059px;top:642px;color:#77ca9b">1</span>
<span class="s" style="left:2087px;top:642px;color:#cccccc">root</span>
<span class="s" style="left:2255px;top:642px;color:#77ca9b">100K</span>
<span class="s" style="left:2423px;top:642px;color:#77ca9b">0.0</span>
<span class="s" style="left:29px;top:671px;color:#cccccc">Cached:</span>
<span class="s" style="left:449px;top:671px;color:#cccccc">122</span>
<span class="s" style="left:505px;top:671px;color:#cccccc">MiB</span>
<span class="s" style="left:57px;top:700px;color:#cccccc">1%</span>
<span class="s" style="left:29px;top:758px;color:#cccccc">Free:</span>
<span class="s" style="left:435px;top:758px;color:#cccccc">14.9</span>
<span class="s" style="left:505px;top:758px;color:#cccccc">GiB</span>
<span class="s" style="left:43px;top:787px;color:#cccccc">96%</span>
<span class="sup" style="left:43px;top:934px;color:#b54040">3</span>
<span class="s b" style="left:57px;top:932px;color:#eeeeee">net</span>
<span class="s b" style="left:127px;top:932px;color:#eeeeee">172.19.98.115</span>
<span class="s b" style="left:715px;top:932px;color:#eeeeee">s</span>
<span class="s b" style="left:729px;top:932px;color:#b54040">y</span>
<span class="s b" style="left:743px;top:932px;color:#eeeeee">nc</span>
<span class="s b" style="left:799px;top:932px;color:#b54040">a</span>
<span class="s b" style="left:813px;top:932px;color:#eeeeee">uto</span>
<span class="s b" style="left:869px;top:932px;color:#b54040">z</span>
<span class="s b" style="left:883px;top:932px;color:#eeeeee">ero</span>
<span class="s b" style="left:953px;top:932px;color:#b54040">&lt;b</span>
<span class="s b" style="left:981px;top:932px;color:#eeeeee"> eth0 </span>
<span class="s b" style="left:1065px;top:932px;color:#b54040">n&gt;</span>
<span class="s" style="left:15px;top:961px;color:#606060">10K</span>
<span class="s b" style="left:785px;top:990px;color:#eeeeee">download</span>
<span class="s" style="left:785px;top:1019px;color:#cccccc">0 Byte/s</span>
<span class="s" style="left:981px;top:1019px;color:#cccccc">(0 bitps)</span>
<span class="s" style="left:785px;top:1048px;color:#cccccc">Top:</span>
<span class="s" style="left:939px;top:1048px;color:#cccccc">(2.92 Kibps)</span>
<span class="s" style="left:785px;top:1077px;color:#cccccc">Total:</span>
<span class="s" style="left:995px;top:1077px;color:#cccccc">3.87 KiB</span>
<span class="s" style="left:785px;top:1135px;color:#cccccc">0 Byte/s</span>
<span class="s" style="left:981px;top:1135px;color:#cccccc">(0 bitps)</span>
<span class="s" style="left:785px;top:1164px;color:#cccccc">Top:</span>
<span class="s" style="left:953px;top:1164px;color:#cccccc">(280 bitps)</span>
<span class="s" style="left:785px;top:1193px;color:#cccccc">Total:</span>
<span class="s" style="left:995px;top:1193px;color:#cccccc">936 Byte</span>
<span class="s" style="left:15px;top:1222px;color:#606060">10K</span>
<span class="s b" style="left:785px;top:1222px;color:#eeeeee">upload</span>
<span class="s b" style="left:1191px;top:1251px;color:#eeeeee">select</span>
<span class="s" style="left:1331px;top:1251px;color:#404040">info</span>
<span class="s" style="left:1443px;top:1251px;color:#404040">terminate</span>
<span class="s" style="left:1597px;top:1251px;color:#404040">kill</span>
<span class="s" style="left:1681px;top:1251px;color:#404040">signals</span>
<span class="s b" style="left:2437px;top:1251px;color:#eeeeee">0/6</span>
</div>
</body></html>
